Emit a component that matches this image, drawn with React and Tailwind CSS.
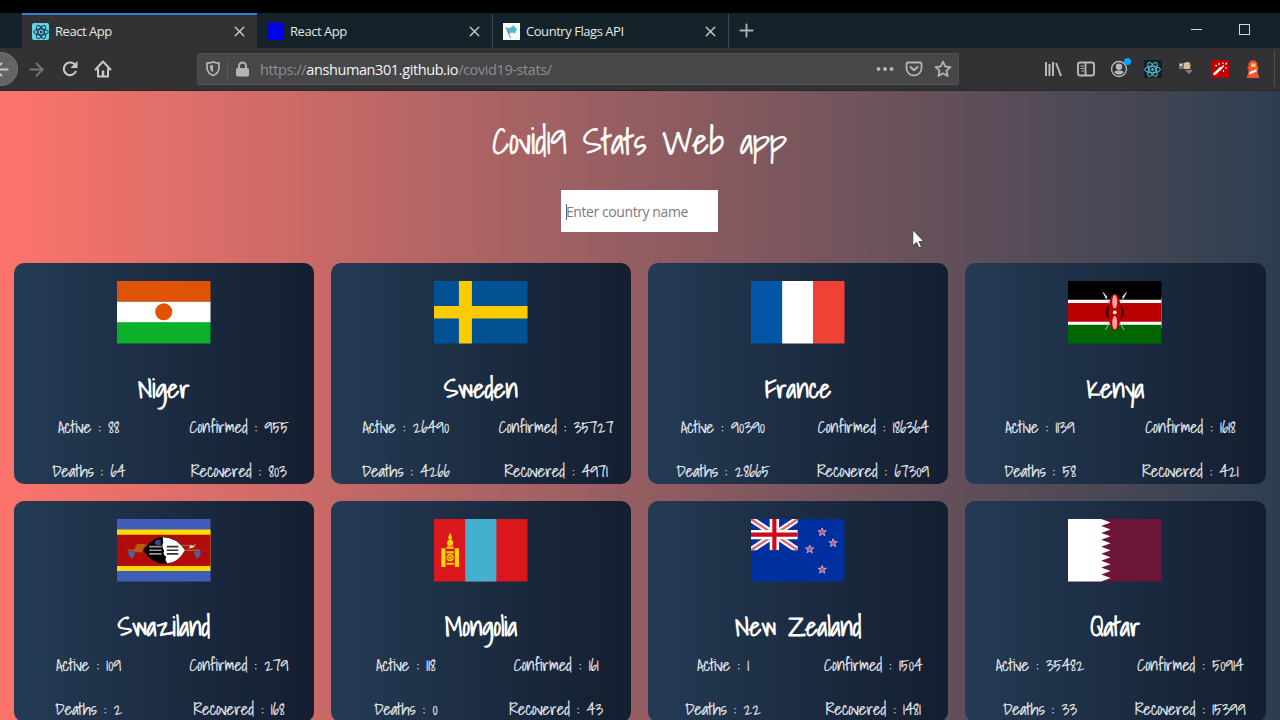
import { ArrowLeft, ArrowRight, Plus, X } from "lucide-react";

const countries = [
  { name: "Niger", active: 88, confirmed: 955, deaths: 64, recovered: 803, flag: NigerFlag },
  { name: "Sweden", active: 26490, confirmed: 35727, deaths: 4266, recovered: 4971, flag: SwedenFlag },
  { name: "France", active: 90390, confirmed: 186364, deaths: 28665, recovered: 67309, flag: FranceFlag },
  { name: "Kenya", active: 1139, confirmed: 1618, deaths: 58, recovered: 421, flag: KenyaFlag },
  { name: "Swaziland", active: 109, confirmed: 279, deaths: 2, recovered: 168, flag: SwazilandFlag },
  { name: "Mongolia", active: 118, confirmed: 161, deaths: 0, recovered: 43, flag: MongoliaFlag },
  { name: "New Zealand", active: 1, confirmed: 1504, deaths: 22, recovered: 1481, flag: NewZealandFlag },
  { name: "Qatar", active: 35482, confirmed: 50914, deaths: 33, recovered: 15399, flag: QatarFlag },
];

function NigerFlag() {
  return (
    <>
      <path fill="#e05206" d="M0 0h90v20H0z" />
      <path fill="#fff" d="M0 20h90v20H0z" />
      <path fill="#0db02b" d="M0 39.5h90V60H0z" />
      <circle cx="45" cy="29.5" r="8.2" fill="#e05206" />
    </>
  );
}

function SwedenFlag() {
  return (
    <>
      <path fill="#005293" d="M0 0h90v60H0z" />
      <path fill="#fecb00" d="M24 0h12.5v60H24zM0 24h90v12H0z" />
    </>
  );
}

function FranceFlag() {
  return (
    <>
      <path fill="#0055a4" d="M0 0h30v60H0z" />
      <path fill="#fff" d="M30 0h30v60H30z" />
      <path fill="#ef4135" d="M60 0h30v60H60z" />
    </>
  );
}

function KenyaFlag() {
  return (
    <>
      <path fill="#fff" d="M0 15h90v30H0z" />
      <path d="M0 0h90v18H0z" />
      <path fill="#b00" d="M0 21h90v18H0z" />
      <path fill="#060" d="M0 42h90v18H0z" />
      <path stroke="#bbb" strokeWidth=".9" d="M36 47 56 11M54 47 34 11" />
      <path fill="#ddd" d="m33 10 5 5-1.500 2zM57 10l-5 5 1.500 2z" />
      <ellipse cx="45" cy="30" rx="8.8" ry="9" fill="#300" />
      <ellipse cx="45" cy="30" rx="6.2" ry="17.5" fill="#b00" />
      <ellipse cx="45" cy="20" rx="2.400" ry="6.500" fill="#f3a4a4" />
      <ellipse cx="45" cy="40" rx="2.400" ry="6.500" fill="#f3a4a4" />
      <circle cx="45" cy="30" r="1.8" fill="#fff" />
    </>
  );
}

function SwazilandFlag() {
  return (
    <>
      <path fill="#3e5eb9" d="M0 0h90v60H0z" />
      <path fill="#ffd900" d="M0 10h90v40H0z" />
      <path fill="#b10c0c" d="M0 15h90v30H0z" />
      <path stroke="#b75a14" strokeWidth="1.5" d="M10 30h70M18 25.5h55" />
      <path fill="#b75a14" d="M17 28l3-4h7l-3 8h-7z" />
      <path fill="#3e67a8" d="M10.500 31h7l-1.500 5-2 2-2-2zM74 31h7l-1.500 5-2 2-2-2z" />
      <path fill="#ddd" d="m69 28 2-3 2 1 3-2-2 3-3 1z" />
      <path fill="#000" d="M25 30q9-13 20-13 12 0 21 13-9 13-21 13-11 0-20-13z" />
      <path fill="#fff" d="M44 17.500q13 0 21.500 12.500-7 12-17 12.500-3-3-1-6-4-3-2-6-3-4-1-8z" />
      <path stroke="#9a9a9a" strokeWidth="1.500" d="M31 26.500h12M31 30h12M31 33.500h12" />
      <path stroke="#333" strokeWidth="1.500" d="M48 26.500h11M48 30h11M48 33.500h11" />
      <path fill="#44447c" d="m36 23 2-3h4v5h-4z" />
    </>
  );
}

function MongoliaFlag() {
  return (
    <>
      <path fill="#da171b" d="M0 0h90v60H0z" />
      <path fill="#45afcf" d="M30 0h30v60H30z" />
      <g fill="#ffd600">
        <path d="M7 28h4v18H7zM20 28h4v18h-4zM15.500 13l2 5-2 3-2-3z" />
        <circle cx="15.500" cy="23" r="3" />
        <path d="M12 26.500h7v2h-7zM12 31h7v2h-7zM12 42h7v2h-7z" />
        <circle cx="15.500" cy="37" r="3.500" />
      </g>
      <path stroke="#da171b" strokeWidth=".8" fill="none" d="M13 37q2.500-3 5 0M13 37q2.500 3 5 0" />
    </>
  );
}

function NewZealandFlag() {
  const stars = [
    [68.5, 12.5],
    [79, 23],
    [56.5, 29],
    [68.5, 48.5],
  ];
  return (
    <>
      <path fill="#0030a0" d="M0 0h90v60H0z" />
      <svg width="45" height="30" viewBox="0 0 45 30">
        <path stroke="#fff" strokeWidth="6" d="m0 0 45 30M45 0 0 30" />
        <path stroke="#d46a73" strokeWidth="2.200" d="m0 0 45 30M45 0 0 30" />
        <path stroke="#fff" strokeWidth="9" d="M22.500 0v30M0 15h45" />
        <path stroke="#cc0a1c" strokeWidth="4" d="M22.500 0v30M0 15h45" />
      </svg>
      {stars.map(([x, y]) => (
        <path
          key={`${x}-${y}`}
          transform={`translate(${x} ${y})`}
          fill="#dc3c58"
          stroke="#c3c3dc"
          strokeWidth=".8"
          d="m0-4 1 2.800h3L1.600.5l1 3L0 1.800l-2.600 1.700 1-3L-4-1.200h3z"
        />
      ))}
    </>
  );
}

function QatarFlag() {
  return (
    <>
      <path fill="#6d1539" d="M0 0h90v60H0z" />
      <path
        fill="#fff"
        d="M0 0h32l9 3.333-9 3.333 9 3.333-9 3.333 9 3.333-9 3.333 9 3.333-9 3.333 9 3.333-9 3.333 9 3.333-9 3.333 9 3.333-9 3.333 9 3.333-9 3.333 9 3.333-9 3.333H0z"
      />
    </>
  );
}

function ReactLogo({ className, color }) {
  return (
    <svg className={className} viewBox="0 0 24 24" fill="none" stroke={color} strokeWidth="1.5">
      <ellipse cx="12" cy="12" rx="11" ry="4.5" />
      <ellipse cx="12" cy="12" rx="11" ry="4.5" transform="rotate(60 12 12)" />
      <ellipse cx="12" cy="12" rx="11" ry="4.5" transform="rotate(120 12 12)" />
      <circle cx="12" cy="12" r="2" fill={color} stroke="none" />
    </svg>
  );
}

function Tab({ title, icon, active }) {
  return (
    <div
      className={
        active
          ? "flex w-[235px] shrink-0 items-center border-t-2 border-[#2a80dc] bg-[#323234] pr-[9px] pl-2.5"
          : "flex w-[236px] shrink-0 items-center border-t-2 border-r border-t-transparent border-r-[#3b494e] pr-[9px] pl-2.5"
      }
    >
      {icon}
      <span className="ml-[6px] flex-1 text-[13px] leading-none tracking-[-0.45px] whitespace-nowrap text-[#e4e6e8]">{title}</span>
      <X size={17} strokeWidth={2.1} className="text-[#c0c4c6]" />
    </div>
  );
}

function TabBar() {
  return (
    <div className="flex h-[35px] bg-[#132329] pl-[22px]">
      <Tab
        active
        title="React App"
        icon={
          <span className="flex size-[17px] items-center justify-center rounded-[2px] bg-[#62d3ee]">
            <ReactLogo className="size-4" color="#17363f" />
          </span>
        }
      />
      <Tab
        title="React App"
        icon={
          <svg className="size-[17px]" viewBox="0 0 17 17">
            <path fill="#0000f4" d="M1 0h15v17H1z" />
            <path stroke="#0808a8" strokeWidth=".7" d="M0 5.500h17M0 11.500h17" />
          </svg>
        }
      />
      <Tab
        title="Country Flags API"
        icon={
          <svg className="size-[17px]" viewBox="0 0 17 17">
            <path fill="#f7fafb" d="M0 0h17v17H0z" />
            <path fill="#54b5cb" d="m3.500 5 3.500 0 4-3 .5 2 2.500 1.500-2 5-3-1-3.500 1.500z" />
            <path stroke="#777" strokeWidth=".9" d="m3 4 4.500 11" />
          </svg>
        }
      />
      <div className="flex w-[34px] items-center justify-center">
        <Plus size={21} strokeWidth={2.2} className="text-[#a9b1b4]" />
      </div>
      <div className="mr-[30px] ml-auto flex items-center gap-[37px] pb-0.5">
        <span className="h-px w-[11px] bg-[#d5dadc]" />
        <span className="size-[11px] border border-[#d5dadc]" />
      </div>
    </div>
  );
}

function AddressBar() {
  return (
    <div className="flex h-8 w-[762px] shrink-0 items-center rounded-[2px] border border-[#505053] bg-[#474749] pr-[6px] pl-[6px] text-[#b4b4b6]">
      <svg className="size-[18px]" viewBox="0 0 18 18" fill="none" stroke="currentColor" strokeWidth="1.700">
        <path d="M9 2q3 1.200 6 1.200v4.300c0 4-2.500 6.500-6 8-3.500-1.500-6-4-6-8V3.200Q6 3.200 9 2z" />
        <path fill="currentColor" stroke="none" d="M9 5v7.500C7 11 6 9.500 6 7.500v-2z" />
      </svg>
      <span className="ml-[5px] h-[22px] w-px bg-[#58585a]" />
      <svg className="ml-[7px] h-4 w-[15px]" viewBox="0 0 15 16">
        <rect x="1" y="7" width="13" height="8.500" rx="1.500" fill="currentColor" />
        <path d="M4 8V5a3.500 3.500 0 0 1 7 0v3" fill="none" stroke="currentColor" strokeWidth="2" />
      </svg>
      <p className="ml-[10px] flex-1 pt-px text-[14.5px] tracking-[-0.4px] whitespace-nowrap text-[#8c8c8f]">
        https://<span className="text-[#f4f4f5]">anshuman301.github.io</span>/covid19-stats/
      </p>
      <div className="flex items-center gap-[11px]">
        <svg className="size-[18px]" viewBox="0 0 18 18" fill="currentColor">
          <circle cx="2.500" cy="9" r="2" />
          <circle cx="9" cy="9" r="2" />
          <circle cx="15.500" cy="9" r="2" />
        </svg>
        <svg className="size-[18px]" viewBox="0 0 18 18" fill="none" stroke="currentColor" strokeWidth="1.800" strokeLinecap="round" strokeLinejoin="round">
          <path d="M2.500 2.500h13a1 1 0 0 1 1 1V8a7.500 7.500 0 0 1-15 0V3.500a1 1 0 0 1 1-1z" />
          <path strokeWidth="2" d="M5.500 7 9 10.300 12.500 7" />
        </svg>
        <svg className="size-[18px]" viewBox="0 0 18 18" fill="none" stroke="currentColor" strokeWidth="1.800" strokeLinejoin="round">
          <path d="m9 1.500 2.200 5 5.300.6-4 3.600 1.100 5.300L9 13.300 4.400 16l1.100-5.300-4-3.600 5.300-.6z" />
        </svg>
      </div>
    </div>
  );
}

function Extensions() {
  return (
    <div className="flex items-center gap-[15.400px] text-[#b9b9bb]">
      <svg className="size-[18px]" viewBox="0 0 18 18" stroke="currentColor" strokeWidth="2" fill="none">
        <path d="M2 2v14M5.500 4v12M9 2v14M12 3 17 16" />
      </svg>
      <svg className="size-[18px]" viewBox="0 0 18 18" stroke="currentColor" strokeWidth="1.900" fill="none">
        <rect x="1" y="2.500" width="16" height="13" rx="2" />
        <path d="M8.500 3v12" />
        <path strokeWidth="1" d="M3.500 6H7M3.500 8.500H7M4.500 11H7" />
      </svg>
      <span className="relative">
        <svg className="size-[18px]" viewBox="0 0 18 18" fill="none" stroke="currentColor" strokeWidth="1.300">
          <circle cx="9" cy="9" r="7.500" />
          <circle cx="9" cy="6.800" r="3.200" fill="currentColor" stroke="none" />
          <path fill="currentColor" stroke="none" d="M4 12q2-2 5-1.500 3-.5 5 1.500-2 2.500-5 2.500T4 12z" />
        </svg>
        <span className="absolute -top-[2px] -right-[3px] size-[7px] rounded-full bg-[#00a8ff]" />
      </span>
      <span className="flex size-[18px] items-center justify-center bg-[#171f25]">
        <ReactLogo className="size-[17px]" color="#55bad4" />
      </span>
      <svg className="size-[18px]" viewBox="0 0 18 18">
        <path fill="#77747b" d="M2 3h5v6H2z" />
        <path fill="#ddd" d="M3 4h2v2H3z" />
        <path fill="#dfbc95" d="M7 3q4-2 6 0v6H7z" />
        <path fill="#8a7b75" d="M12 4h2v6H8l4 4 3-3z" />
      </svg>
      <svg className="size-[18px]" viewBox="0 0 18 18">
        <rect width="18" height="18" rx="1.500" fill="#c00000" />
        <path stroke="#fff" strokeWidth="2.500" strokeLinecap="round" d="m3.500 14 6.500-6" />
        <path stroke="#fff" strokeWidth="1.200" d="M11 7.500 13 5.500M8 3v2M12 2.500v1.500M14.500 4.500 16 3M14 8h2M4.500 5l1.500 1M12.500 10v2" />
      </svg>
      <svg className="size-[18px]" viewBox="0 0 18 18">
        <path fill="#f4512c" d="M7 .5h4l2.500 3V7h1v2h-1l.5 6h1v3H3v-3h1l.5-6h-1V7h1V3.500z" />
        <path fill="#ffd05a" d="M7 3.500h4.500V7H7z" />
        <path fill="#fff" d="m5.500 12 7-3v2.500l-7 3z" />
      </svg>
    </div>
  );
}

function Toolbar() {
  return (
    <div className="flex h-[43px] items-center border-b border-[#29292b] bg-[#323234] text-[#c9c9cb]">
      <div className="-ml-4 flex size-[34px] shrink-0 items-center justify-center rounded-full border border-[#737375] bg-[#646466]">
        <ArrowLeft size={21} strokeWidth={2.2} />
      </div>
      <ArrowRight size={21} strokeWidth={2.2} className="ml-2 text-[#757578]" />
      <svg className="ml-[14px] size-[18px]" viewBox="0 0 18 18" fill="none" stroke="currentColor" strokeWidth="2.100">
        <path d="M14.500 5.500A6.300 6.300 0 1 0 15 11" />
        <path fill="currentColor" stroke="none" d="M16.500 1v7h-7z" />
      </svg>
      <svg className="ml-[15px] size-[18px]" viewBox="0 0 18 18" fill="none" stroke="currentColor" strokeWidth="2" strokeLinejoin="round" strokeLinecap="round">
        <path d="m1.500 9.500 7.500-8 7.500 8" />
        <path d="M4 9v7.500h10V9" />
        <path strokeLinecap="butt" strokeWidth="2.500" d="M9 10.500v6" />
      </svg>
      <div className="ml-[85px] flex">
        <AddressBar />
      </div>
      <div className="ml-auto flex items-center gap-3">
        <Extensions />
        <span className="mr-[5px] h-9 w-px bg-[#505053]" />
      </div>
    </div>
  );
}

function Stat({ label, value }) {
  return (
    <p className="h-11 text-[17px] leading-[22px] tracking-[-0.12px] [-webkit-text-stroke:0.2px]">
      {label} : {value}
    </p>
  );
}

function CountryCard({ country }) {
  const Flag = country.flag;
  return (
    <div className="flex h-[221px] flex-col items-center overflow-hidden rounded-[10px] bg-linear-to-r from-[#243b55] to-[#141e30] pt-[18px]">
      <svg className="h-[62.500px] w-[93.500px] shrink-0" viewBox="0 0 90 60" preserveAspectRatio="none">
        <Flag />
      </svg>
      <h2 className="mt-[27px] text-[26.5px] leading-[34px] font-bold tracking-[-0.15px]">{country.name}</h2>
      <div className="mt-[11px] grid w-full grid-cols-2 text-center text-[#eceff3]">
        <Stat label="Active" value={country.active} />
        <Stat label="Confirmed" value={country.confirmed} />
        <Stat label="Deaths" value={country.deaths} />
        <Stat label="Recovered" value={country.recovered} />
      </div>
    </div>
  );
}

export default function App() {
  return (
    <div className="relative h-screen overflow-hidden bg-black pt-[13px] font-['Segoe_UI','Open_Sans',sans-serif]">
      <TabBar />
      <Toolbar />
      <main className="h-[629px] overflow-hidden bg-linear-to-r from-[#fd746c] to-[#2c3e50] pr-px font-['Shadows_Into_Light','Liberation_Sans_Narrow','Roboto_Condensed',cursive] text-white">
        <h1 className="pt-[28px] text-center text-[35px] leading-[44px] font-normal [-webkit-text-stroke:0.6px]">Covid19 Stats Web app</h1>
        <div className="mt-[27px] flex justify-center">
          <input
            className="h-[42px] w-[157px] bg-white px-[5px] font-['Segoe_UI','Open_Sans',sans-serif] text-[14px] tracking-[-0.42px] text-gray-700 placeholder-[#7b7b7b] outline-none"
            placeholder="Enter country name"
          />
        </div>
        <div className="mt-[31px] grid grid-cols-4 gap-x-[16.500px] gap-y-[17px] px-[13.500px]">
          {countries.map((country) => (
            <CountryCard key={country.name} country={country} />
          ))}
        </div>
      </main>
      <span className="absolute top-[204px] left-[566px] h-4 w-px bg-[#666]" />
      <svg className="absolute top-[229px] left-[912px] h-5 w-3" viewBox="0 0 12 20">
        <path fill="#fff" stroke="#333" strokeWidth=".8" d="M.8.8v16l3.700-3.500 2.500 5.500 2.500-1L7 12.500h4.800z" />
      </svg>
    </div>
  );
}
